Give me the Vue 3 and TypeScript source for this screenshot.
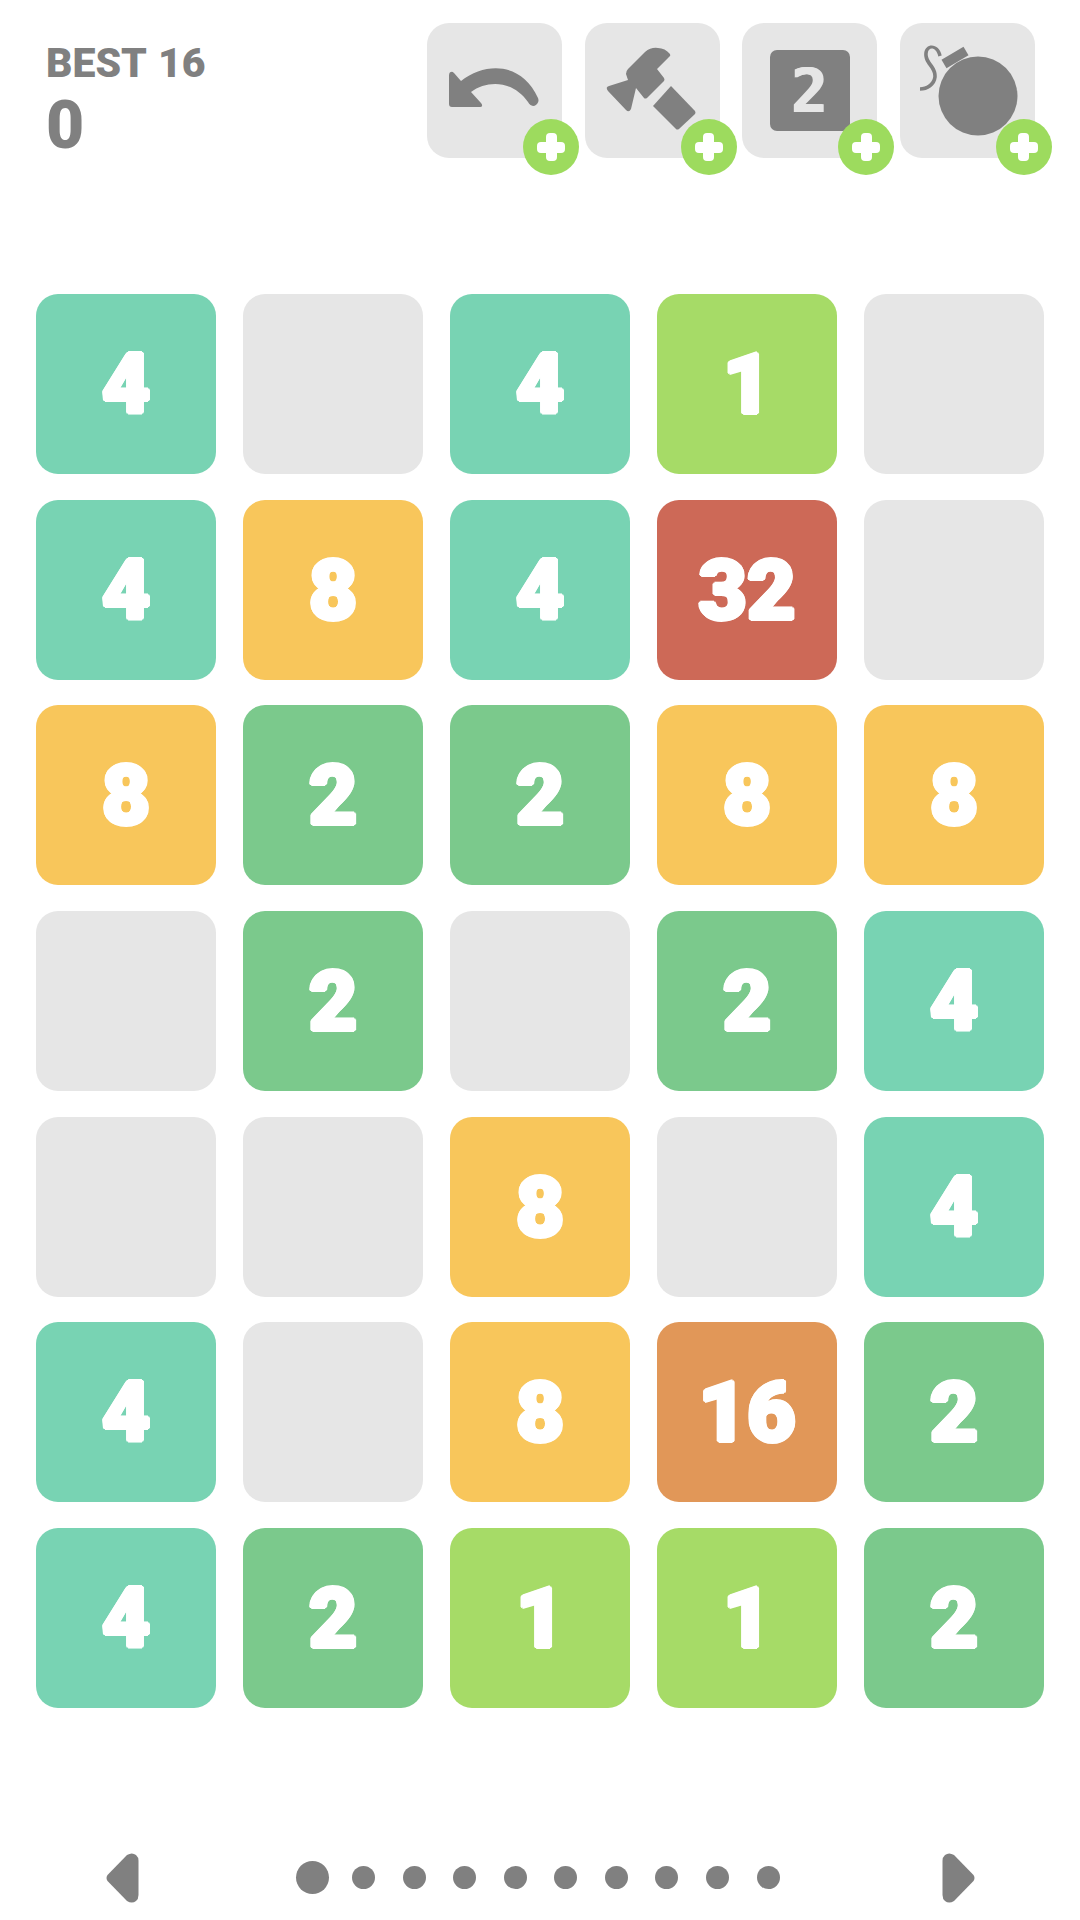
<script setup lang="ts">
const board: number[][] = [
  [4, 0, 4, 1, 0],
  [4, 8, 4, 32, 0],
  [8, 2, 2, 8, 8],
  [0, 2, 0, 2, 4],
  [0, 0, 8, 0, 4],
  [4, 0, 8, 16, 2],
  [4, 2, 1, 1, 2],
]
const tiles = board.flat()
const tools = ['undo', 'hammer', 'number', 'bomb']
const dots = Array.from({ length: 10 }, (_, i) => i)
</script>

<template>
  <main class="page">
    <header class="top">
      <div class="score">
        <div class="best">BEST 16</div>
        <div class="now">0</div>
      </div>
      <div class="tools">
        <div v-for="t in tools" :key="t" class="tool">
          <svg v-if="t === 'undo'" class="icon" viewBox="0 0 135 135">
            <path class="ink" d="M24 49 Q22 49 22 53 L22 81 Q22 84 25 84 L52 84 Q57 84 54 80 L44 69 C60 57 86 57 101 79 Q103 83 107 83 Q113 80 111 75 C95 40 60 38 34 58 L27 50 Q25 48 24 49 Z" />
          </svg>
          <svg v-else-if="t === 'hammer'" class="icon" viewBox="0 0 135 135">
            <path class="ink" d="M43 46 L60 29 Q66 24 73 25 Q80 25 85 31 Q86 33 84 34 L72 46 L79 55 Q80 57 79 58 L62 75 Q60 76 59 75 L51 65 L46 86 Q44 90 41 87 L23 68 Q20 64 24 63 L43 57 L41 51 Q41 48 43 46 Z" />
            <path class="ink" d="M86 63 L110 88 Q111 90 110 91 L94 106 Q92 107 91 106 L68 83 Z" />
          </svg>
          <div v-else-if="t === 'number'" class="chip"><span class="chip-num">2</span></div>
          <svg v-else class="icon" viewBox="0 0 135 135">
            <circle class="ink" cx="78" cy="73" r="39.5" />
            <path class="ink" d="M41.5 36.7 L63.5 23.7 L68.5 32.3 L46.5 45.3 Z" />
            <path class="ink" d="M41.7 32.6 C39.5 20 25.5 19 24.2 30 C23.2 41 34.2 45 33.2 54 C32.2 60.5 26 64.2 20 64.2 L20 67.8 C28 67.8 35.8 63 36.8 54 C37.8 43 26.8 39 27.8 30 C28.5 23 36.5 24 38.3 33.4 Z" />
          </svg>
          <span class="plus-badge"></span>
        </div>
      </div>
    </header>

    <section class="board">
      <div v-for="(v, i) in tiles" :key="i" class="tile" :class="v ? 'v' + v : 'empty'">
        <span v-if="v" class="num">{{ v }}</span>
      </div>
    </section>

    <footer class="pager">
      <svg class="arrow" viewBox="0 0 33 50">
        <path class="ink" d="M21 2 Q26 -1 30 2 Q32.5 4 32.5 8 L32.5 42 Q32.5 46 30 48 Q26 51 21 48 L1.5 28 Q-.5 25 1.5 22 Z" />
      </svg>
      <div class="dots">
        <span v-for="d in dots" :key="d" class="slot"><i class="dot" :class="{ big: d === 0 }"></i></span>
      </div>
      <svg class="arrow" viewBox="0 0 33 50">
        <path class="ink" d="M12 2 Q7 -1 3 2 Q.5 4 .5 8 L.5 42 Q.5 46 3 48 Q7 51 12 48 L31.5 28 Q33.5 25 31.5 22 Z" />
      </svg>
    </footer>
  </main>
</template>

<style scoped>
.page {
  width: 1080px;
  height: 1920px;
  background: #fff;
  overflow: hidden;
  font-family: Roboto, "Open Sans", sans-serif;
}
.ink {
  fill: #808080;
}
.top {
  height: 294px;
  box-sizing: border-box;
  padding: 23px 45.5px 0 46px;
  display: flex;
  justify-content: space-between;
  align-items: flex-start;
}
.score {
  color: #808080;
  font-weight: 900;
}
.best {
  margin-top: 18px;
  font-size: 41px;
  line-height: 44px;
  word-spacing: 2px;
}
.now {
  font-size: 66px;
  line-height: 66px;
  margin-top: 8px;
}
.tools {
  display: flex;
  gap: 22.5px;
}
.tool {
  position: relative;
  width: 135px;
  height: 135px;
  border-radius: 22px;
  background: #e6e6e6;
  display: flex;
  align-items: center;
  justify-content: center;
}
.icon {
  width: 135px;
  height: 135px;
  display: block;
}
.chip {
  width: 80px;
  height: 81px;
  border-radius: 7px;
  background: #808080;
  display: flex;
  align-items: center;
  justify-content: center;
}
.chip-num {
  color: #e6e6e6;
  font-family: "DejaVu Sans Mono", monospace;
  font-weight: 700;
  font-size: 60px;
  line-height: 60px;
  text-shadow: 1px 0 #e6e6e6, -1px 0 #e6e6e6;
}
.plus-badge {
  position: absolute;
  right: -17px;
  bottom: -17px;
  width: 56px;
  height: 56px;
  border-radius: 50%;
  background: #9ddb5e;
  display: grid;
  place-items: center;
}
.plus-badge::before,
.plus-badge::after {
  content: "";
  grid-area: 1 / 1;
  background: #fff;
  border-radius: 4px;
}
.plus-badge::before {
  width: 28px;
  height: 11px;
}
.plus-badge::after {
  width: 11px;
  height: 28px;
}
.board {
  margin-left: 36px;
  display: grid;
  grid-template-columns: repeat(5, 180px);
  grid-auto-rows: 180px;
  column-gap: 27px;
  row-gap: 25.67px;
}
.tile {
  border-radius: 22px;
  display: flex;
  align-items: center;
  justify-content: center;
  padding-top: 2px;
  box-sizing: border-box;
}
.num {
  color: #fff;
  font-size: 84px;
  font-weight: 900;
  line-height: 1;
  text-shadow: 2px 0 #fff, -2px 0 #fff, 0 2px #fff, 0 -2px #fff, 1.4px 1.4px #fff, -1.4px 1.4px #fff, 1.4px -1.4px #fff, -1.4px -1.4px #fff;
}
.empty { background: #e6e6e6; }
.v1 { background: #a6db67; }
.v2 { background: #7bc98c; }
.v4 { background: #78d3b3; }
.v8 { background: #f8c65b; }
.v16 { background: #e19758; }
.v32 { background: #cd6957; }
.pager {
  margin-top: 145px;
  padding: 0 105px 0 106px;
  display: flex;
  align-items: center;
  justify-content: space-between;
}
.arrow {
  width: 33px;
  height: 50px;
  display: block;
}
.dots {
  display: flex;
}
.slot {
  width: 50.6px;
  height: 33px;
  display: flex;
  align-items: center;
  justify-content: center;
}
.dot {
  width: 23px;
  height: 23px;
  border-radius: 50%;
  background: #808080;
  display: block;
}
.dot.big {
  width: 33px;
  height: 33px;
}
</style>
